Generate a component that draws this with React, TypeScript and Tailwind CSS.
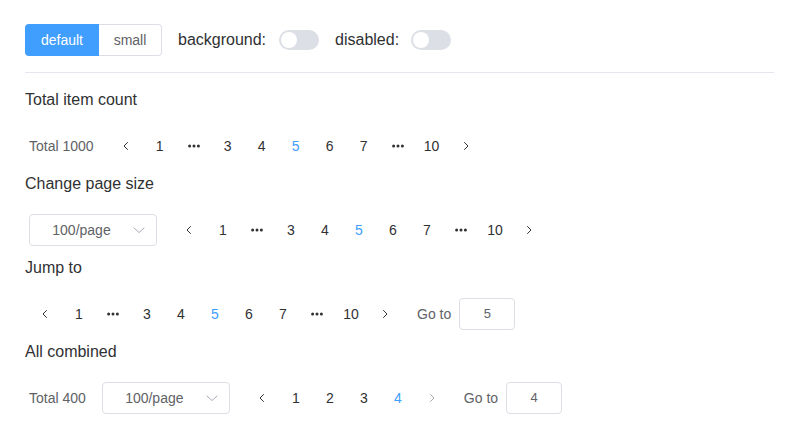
import React from "react";

type Item = number | "more";

const ChevronLeft = ({ disabled }: { disabled?: boolean }) => (
  <svg width="12" height="12" viewBox="0 0 12 12" fill="none">
    <path
      d="M7.5 2.5 L4 6 L7.5 9.5"
      stroke={disabled ? "#a8abb2" : "#303133"}
      strokeWidth="1"
      strokeLinecap="round"
      strokeLinejoin="round"
    />
  </svg>
);

const ChevronRight = ({ disabled }: { disabled?: boolean }) => (
  <svg width="12" height="12" viewBox="0 0 12 12" fill="none">
    <path
      d="M4.5 2.5 L8 6 L4.5 9.5"
      stroke={disabled ? "#a8abb2" : "#303133"}
      strokeWidth="1"
      strokeLinecap="round"
      strokeLinejoin="round"
    />
  </svg>
);

const More = () => (
  <svg width="12" height="4" viewBox="0 0 12 4" fill="#303133">
    <circle cx="1.6" cy="2" r="1.5" />
    <circle cx="6" cy="2" r="1.5" />
    <circle cx="10.4" cy="2" r="1.5" />
  </svg>
);

const Switch = () => (
  <div className="w-[40px] h-[20px] rounded-full bg-[#dcdfe6] flex items-center px-[2px]">
    <div className="w-[16px] h-[16px] rounded-full bg-white" />
  </div>
);

const Total = ({ n }: { n: number }) => (
  <span className="text-[14px] text-[#606266] mr-[16px]">Total {n}</span>
);

const SizeSelect = () => (
  <div className="w-[128px] h-[32px] mr-[16px] rounded-[4px] border border-[#dcdfe6] flex items-center pr-[11px]">
    <span className="flex-1 text-center text-[14px] text-[#606266]">100/page</span>
    <svg width="12" height="8" viewBox="0 0 12 8" fill="none">
      <path d="M1 2 L6 6.5 L11 2" stroke="#a8abb2" strokeWidth="1" strokeLinecap="round" strokeLinejoin="round" />
    </svg>
  </div>
);

const Jumper = ({ value }: { value: number }) => (
  <div className="flex items-center ml-[16px]">
    <span className="text-[14px] text-[#606266]">Go to</span>
    <div className="ml-[8px] w-[56px] h-[32px] rounded-[4px] border border-[#dcdfe6] flex items-center justify-center text-[13px] text-[#606266]">
      {value}
    </div>
  </div>
);

const Pager = ({ items, active, nextDisabled }: { items: Item[]; active: number; nextDisabled?: boolean }) => (
  <div className="flex items-center gap-[2px]">
    <div className="w-8 h-8 flex items-center justify-center">
      <ChevronLeft />
    </div>
    {items.map((it, i) => (
      <div
        key={i}
        className={
          "min-w-8 h-8 flex items-center justify-center text-[14px] " +
          (it === active ? "text-[#409eff]" : "text-[#303133]")
        }
      >
        {it === "more" ? <More /> : it}
      </div>
    ))}
    <div className="w-8 h-8 flex items-center justify-center">
      <ChevronRight disabled={nextDisabled} />
    </div>
  </div>
);

const longItems: Item[] = [1, "more", 3, 4, 5, 6, 7, "more", 10];

const Block = ({ title, children }: { title: string; children: React.ReactNode }) => (
  <div className="mt-2 first:mt-0">
    <div className="h-6 leading-6 text-[16px] text-[#303133]">{title}</div>
    <div className="mt-4 h-[36px] flex items-center pl-[4px]">{children}</div>
  </div>
);

export default function App() {
  return (
    <div
      className="w-[797px] h-[439px] bg-white pl-[25px] pt-[24px] overflow-hidden"
      style={{ fontFamily: '"Liberation Sans", Arial, sans-serif' }}
    >
      {/* controls */}
      <div className="flex items-center h-[32px]">
        <div className="flex">
          <div className="h-[32px] w-[74px] flex items-center justify-center rounded-l-[4px] bg-[#409eff] text-white text-[14px]">
            default
          </div>
          <div className="h-[32px] w-[63px] flex items-center justify-center rounded-r-[4px] border border-l-0 border-[#dcdfe6] text-[#606266] text-[14px]">
            small
          </div>
        </div>
        <span className="ml-[16px] text-[16px] text-[#303133]">background:</span>
        <div className="ml-[13px]">
          <Switch />
        </div>
        <span className="ml-[16px] text-[16px] text-[#303133]">disabled:</span>
        <div className="ml-[12px]">
          <Switch />
        </div>
      </div>

      <div className="mt-[16px] h-px w-[749px] bg-[#e4e7ed]" />

      <div className="mt-[15px]">
        <Block title="Total item count">
          <Total n={1000} />
          <Pager items={longItems} active={5} />
        </Block>
        <Block title="Change page size">
          <SizeSelect />
          <Pager items={longItems} active={5} />
        </Block>
        <Block title="Jump to">
          <Pager items={longItems} active={5} />
          <Jumper value={5} />
        </Block>
        <Block title="All combined">
          <Total n={400} />
          <SizeSelect />
          <Pager items={[1, 2, 3, 4]} active={4} nextDisabled />
          <Jumper value={4} />
        </Block>
      </div>
    </div>
  );
}
